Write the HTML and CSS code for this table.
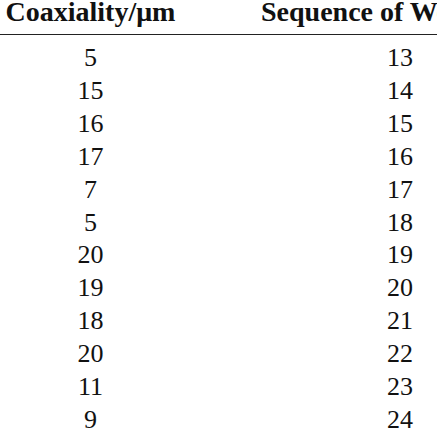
FILE: index.html
```html
<!DOCTYPE html>
<html>
<head>
<meta charset="utf-8">
<link rel="stylesheet" href="styles.css">
</head>
<body>
<table class="data">
<thead>
<tr><th class="c1">Coaxiality/μm</th><th class="c2">Sequence of Workpiece</th></tr>
</thead>
<tbody>
<tr><td>5</td><td>13</td></tr>
<tr><td>15</td><td>14</td></tr>
<tr><td>16</td><td>15</td></tr>
<tr><td>17</td><td>16</td></tr>
<tr><td>7</td><td>17</td></tr>
<tr><td>5</td><td>18</td></tr>
<tr><td>20</td><td>19</td></tr>
<tr><td>19</td><td>20</td></tr>
<tr><td>18</td><td>21</td></tr>
<tr><td>20</td><td>22</td></tr>
<tr><td>11</td><td>23</td></tr>
<tr><td>9</td><td>24</td></tr>
</tbody>
</table>
</body>
</html>
```
FILE: styles.css
```css
html, body {
  margin: 0;
  padding: 0;
  background: #fff;
  overflow: hidden;
  width: 437px;
  height: 437px;
}
.data {
  border-collapse: collapse;
  table-layout: fixed;
  width: 619px;
  font-family: "Liberation Serif", serif;
  color: #111;
}
.c1 { width: 181px; }
.c2 { width: 438px; }
.data th {
  font-size: 28px;
  font-weight: bold;
  text-align: center;
  white-space: nowrap;
  padding: 0 0 10.5px;
  line-height: 23px;
  vertical-align: top;
  border-bottom: 1.5px solid #222;
}
.data td {
  font-size: 26px;
  text-align: center;
  padding: 0;
  height: 32.9px;
  line-height: 32.9px;
}
.data tbody tr:first-child td {
  padding-top: 7.5px;
}
```
